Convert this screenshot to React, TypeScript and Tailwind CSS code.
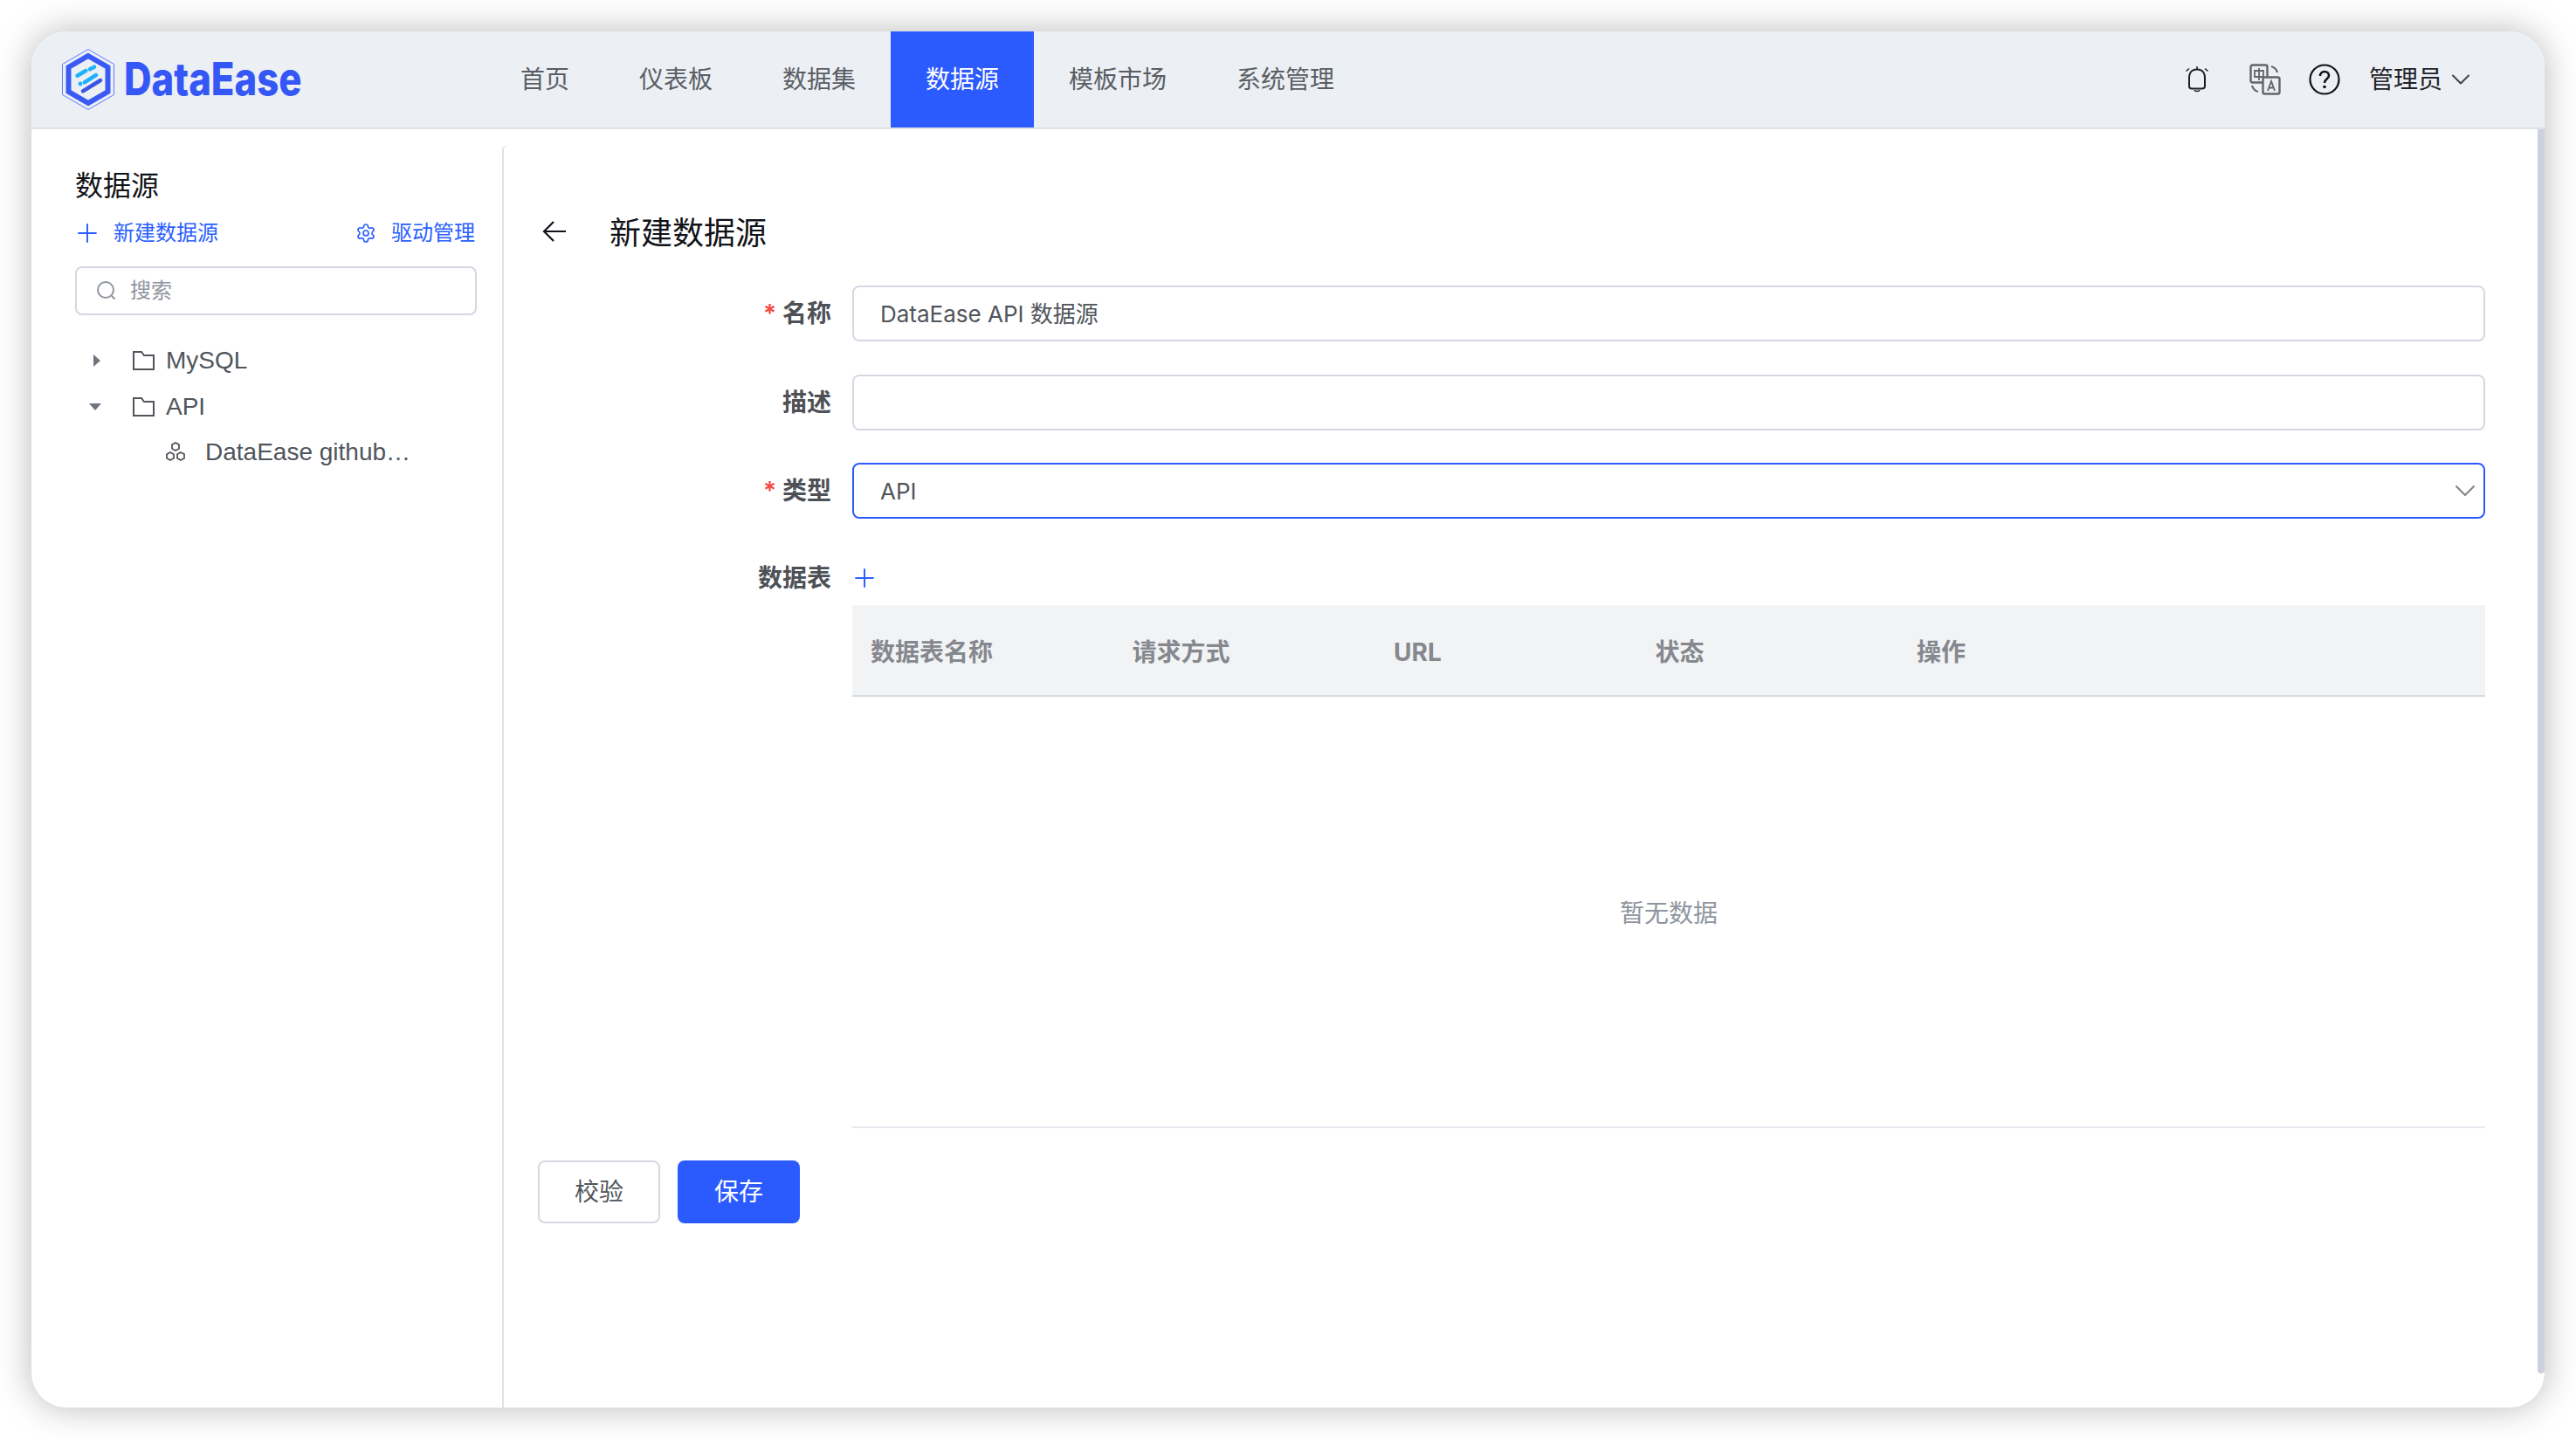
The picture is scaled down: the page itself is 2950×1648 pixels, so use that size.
import { ChevronDown, Plus, Settings } from "lucide-react";

const FONT = "font-['Inter','Noto_Sans_CJK_SC',sans-serif]";

const navItems = ["首页", "仪表板", "数据集", "数据源", "模板市场", "系统管理"];
const columns = ["数据表名称", "请求方式", "URL", "状态", "操作"];

function Logo() {
  return (
    <svg width="60" height="70" viewBox="0 0 60 70" fill="none">
      <path d="M30 .5 59.500 17.500v35L30 69.500.5 52.500v-35Z" stroke="#5f7cf6" strokeWidth="1" />
      <path d="M30 8 52.500 21v28L30 62 7.500 49V21Z" stroke="#3a5af5" strokeWidth="6" />
      <g strokeLinecap="round" strokeWidth="4.500">
        <path d="M32 23.300l5-2.600" stroke="#1eb1fb" />
        <path d="M17.500 30.700l9.800-5.700" stroke="#1eb1fb" />
        <path d="M25.700 38.300 39 30" stroke="#1eb1fb" />
        <path d="M24 48.300 44 36" stroke="#3a55e4" />
      </g>
      <circle cx="21" cy="40" r="2.400" fill="#1eb1fb" />
    </svg>
  );
}

function BellIcon() {
  return (
    <svg width="28" height="32" viewBox="0 0 28 32" fill="none" stroke="#1d1f23" strokeWidth="2">
      <path d="M6.500 8C8 5.800 10.800 4.500 14 4.500s6 1.300 7.500 3.500c1.200 1.800 1.500 4 1.500 6.500v9c0 2-1 3-3 3H8c-2 0-3-1-3-3v-9c0-2.500.3-4.700 1.500-6.500Z" />
      <path d="M14 1v3.500M1.500 6.500 5 3.500M26.500 6.500 23 3.500" strokeWidth="1.500" />
      <path d="M11 28c.5 2 5.500 2 6 0" strokeWidth="1.500" />
    </svg>
  );
}

function TranslateIcon() {
  return (
    <svg width="36" height="36" viewBox="0 0 36 36" fill="none" stroke="#62666c" strokeWidth="2.400">
      <rect x="1.500" y="1.500" width="19" height="20" rx="2" fill="#eceff4" />
      <rect x="15.500" y="15.500" width="19" height="19" rx="2" fill="#eceff4" />
      <path d="M6 8h10v7H6ZM11 5v14" strokeWidth="1.800" />
      <path d="M21 31l4-11 4 11M22.500 27.500h5" strokeWidth="1.800" />
      <path d="M25 3c3.500 1 6 3.500 7 7M3 25c1 3.500 3 6 7 7" strokeWidth="2.200" />
    </svg>
  );
}

function HelpIcon() {
  return (
    <svg width="36" height="36" viewBox="0 0 36 36" fill="none" stroke="#111318" strokeWidth="2.200">
      <circle cx="18" cy="18" r="16.500" />
      <path d="M13 14c0-3 2.200-5 5-5s5 1.900 5 4.600c0 4-5 4-5 8.400" strokeWidth="2.600" />
      <circle cx="18" cy="26.500" r="1.800" fill="#111318" stroke="none" />
    </svg>
  );
}

function FolderIcon() {
  return (
    <svg width="25" height="24" viewBox="0 0 25 24" fill="none" stroke="#50555c" strokeWidth="2">
      <path d="M1 2h9l3 4h11v16H1Z" />
    </svg>
  );
}

function DatasourceIcon() {
  return (
    <svg width="26" height="26" viewBox="0 0 26 26" fill="none" stroke="#50555c" strokeWidth="1.800">
      <path d="M13 2l4 2.300v4.400L13 11 9 8.700V4.300Z" />
      <path d="M7 13l4 2.300v4.400L7 22l-4-2.300v-4.400Z" />
      <path d="M19 13l4 2.300v4.400L19 22l-4-2.300v-4.400Z" />
    </svg>
  );
}

function FormRow({ label, required, children }: { label: string; required?: boolean; children: React.ReactNode }) {
  return (
    <div className="flex items-center">
      <div className="flex w-[336px] items-center justify-end text-[28px] font-semibold text-[#4d5156]">
        {required && <span className="mr-[7px] text-[#f54a45]">*</span>}
        {label}
      </div>
      <div className="ml-[24px] flex-1">{children}</div>
    </div>
  );
}

export default function App() {
  return (
    <div className={`${FONT} h-[1648px] w-[2950px] overflow-hidden bg-white pt-[36px] pl-[36px]`}>
      <div className="flex h-[1576px] w-[2878px] flex-col overflow-hidden rounded-[40px] bg-white shadow-[0_0_40px_rgba(0,0,0,0.28)]">
        {/* Top bar */}
        <header className="flex h-[112px] shrink-0 items-stretch border-b-2 border-[#dfe1e6] bg-[#eceff4]">
          <div className="flex w-[520px] items-center pl-[35px]">
            <Logo />
            <span className="ml-[11px] origin-left scale-x-[0.84] text-[52px] leading-none font-extrabold text-[#3557f5]">DataEase</span>
          </div>
          <nav className="flex items-stretch">
            {navItems.map((item) => (
              <div
                key={item}
                className={
                  item === "数据源"
                    ? "flex items-center bg-[#2b5aff] px-[40px] text-[28px] text-white"
                    : "flex items-center px-[40px] text-[28px] text-[#5a5e64]"
                }
              >
                {item}
              </div>
            ))}
          </nav>
          <div className="ml-auto flex items-center pr-[78px]">
            <BellIcon />
            <div className="ml-[46px]"><TranslateIcon /></div>
            <div className="ml-[32px]"><HelpIcon /></div>
            <span className="ml-[33px] text-[28px] text-[#1f2329]">管理员</span>
            <ChevronDown size={36} strokeWidth={1.3} className="ml-[3px] text-[#3f4349]" />
          </div>
        </header>

        <div className="flex min-h-0 flex-1">
          {/* Sidebar */}
          <aside className="w-[539px] shrink-0 pt-[43px] pr-[29px] pl-[50px]">
            <div className="text-[32px] leading-[44px] text-[#111318]">数据源</div>
            <div className="mt-[16px] flex h-[32px] items-center text-[24px] text-[#2b5fff]">
              <Plus size={34} strokeWidth={1.4} className="-ml-[3px]" />
              <span className="ml-[13px]">新建数据源</span>
              <Settings size={24} strokeWidth={1.7} className="ml-auto" />
              <span className="mr-[2px] ml-[17px]">驱动管理</span>
            </div>
            <div className="mt-[22px] flex h-[56px] items-center rounded-[8px] border-2 border-[#d5d8e3] pl-[22px]">
              <svg width="24" height="24" viewBox="0 0 24 24" fill="none" stroke="#8f959e" strokeWidth="2">
                <circle cx="11" cy="11" r="9" />
                <path d="M18 18l3.500 3.500" />
              </svg>
              <span className="ml-[15px] text-[24px] text-[#8f959e]">搜索</span>
            </div>
            <div className="mt-[26px] font-['Liberation_Sans','Noto_Sans_CJK_SC',sans-serif] text-[28px] text-[#50555c]">
              <div className="flex h-[52.500px] items-center">
                <div className="ml-[21px] h-0 w-0 border-y-[7px] border-l-[8px] border-y-transparent border-l-[#6e7480]" />
                <div className="ml-[37px]"><FolderIcon /></div>
                <span className="ml-[13px]">MySQL</span>
              </div>
              <div className="flex h-[52.500px] items-center">
                <div className="ml-[16px] h-0 w-0 border-x-[7px] border-t-[8px] border-x-transparent border-t-[#6e7480]" />
                <div className="ml-[36px]"><FolderIcon /></div>
                <span className="ml-[13px]">API</span>
              </div>
              <div className="flex h-[52.500px] items-center pl-[102px]">
                <DatasourceIcon />
                <span className="ml-[21px] whitespace-nowrap">DataEase github…</span>
              </div>
            </div>
          </aside>

          {/* Main panel */}
          <main className="mt-[18px] flex-1 rounded-tl-[6px] border-l-2 border-[#dfe1e6] pt-[75px] pr-[60px] pl-[39px]">
            <div className="flex h-[48px] items-center">
              <svg width="28" height="28" viewBox="0 0 28 28" fill="none" stroke="#111318" strokeWidth="2.200" className="ml-[5px]">
                <path d="M27 14H2M13 3 2 14l11 11" />
              </svg>
              <span className="mt-[3px] ml-[49px] text-[36px] text-[#111318]">新建数据源</span>
            </div>

            <div className="mt-[38px] flex flex-col gap-[37.500px]">
              <FormRow label="名称" required>
                <div className="flex h-[64px] items-center rounded-[8px] border-2 border-[#d5d8e3] pl-[30px] text-[26px] text-[#50555c]">
                  DataEase API 数据源
                </div>
              </FormRow>
              <FormRow label="描述">
                <div className="h-[64px] rounded-[8px] border-2 border-[#d5d8e3]" />
              </FormRow>
              <FormRow label="类型" required>
                <div className="flex h-[64px] items-center justify-between rounded-[8px] border-2 border-[#2b5aff] pr-[1px] pl-[30px] text-[26px] text-[#50555c]">
                  API
                  <ChevronDown size={40} strokeWidth={1.2} className="text-[#7f838a]" />
                </div>
              </FormRow>
            </div>

            <div className="mt-[47px]">
              <FormRow label="数据表">
                <div className="flex h-[40px] items-center">
                  <Plus size={34} strokeWidth={1.4} className="-ml-[3px] text-[#2b5fff]" />
                </div>
              </FormRow>
            </div>

            <div className="mt-[10px] ml-[360px] border-b-2 border-[#e6e8ee]">
              <div className="flex h-[105px] items-center border-b-2 border-[#d5dde4] bg-[#f2f3f5] pt-[5px]">
                {columns.map((c) => (
                  <div key={c} className="w-[299.500px] pl-[21px] text-[28px] font-bold text-[#85888e]">
                    {c}
                  </div>
                ))}
              </div>
              <div className="flex h-[492px] items-center justify-center pt-[4px] text-[28px] text-[#8f959e]">暂无数据</div>
            </div>

            <div className="mt-[37px] flex gap-[20px]">
              <button className="h-[72px] w-[140px] rounded-[8px] border-2 border-[#d5d8e3] bg-white text-[28px] text-[#50555c]">校验</button>
              <button className="h-[72px] w-[140px] rounded-[8px] bg-[#2b5aff] text-[28px] text-white">保存</button>
            </div>
          </main>

          {/* Scrollbar */}
          <div className="mb-[39px] w-[8px] shrink-0 rounded-b-[4px] bg-[#cfd0de]" />
        </div>
      </div>
    </div>
  );
}
